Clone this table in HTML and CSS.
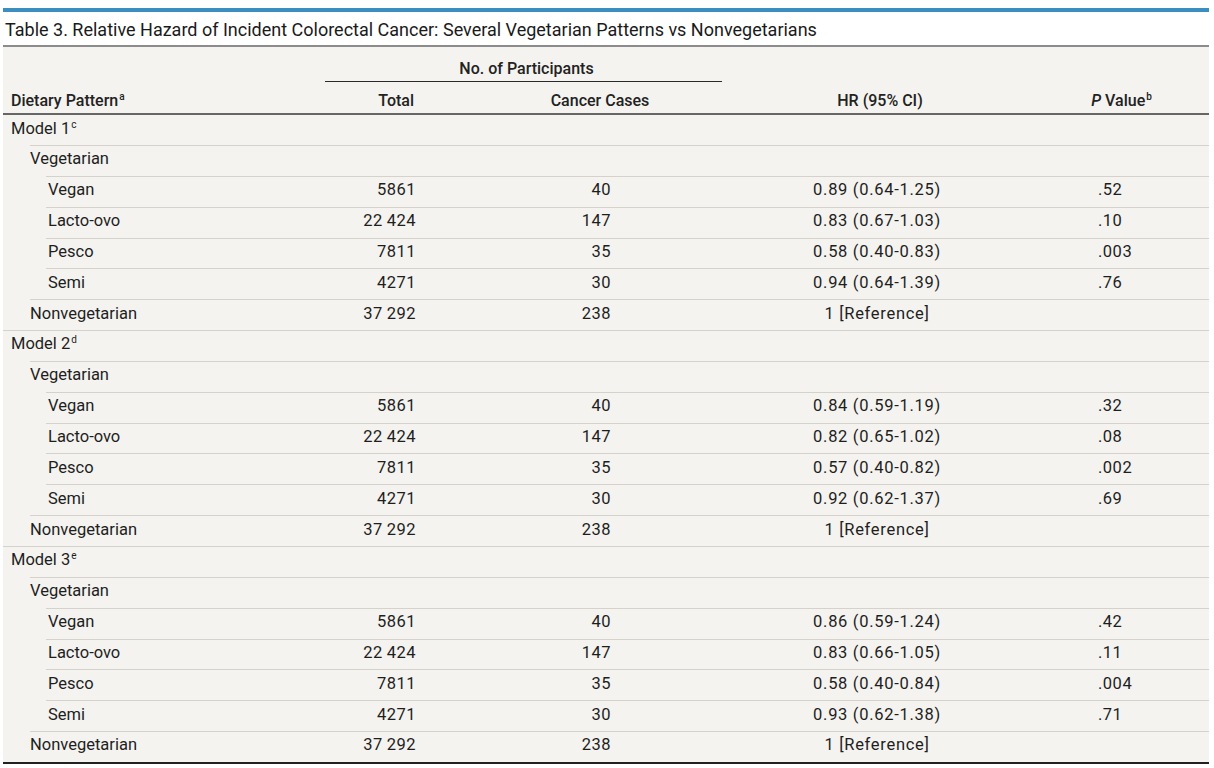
FILE: index.html
```html
<!DOCTYPE html>
<html lang="en">
<head>
<meta charset="utf-8">
<title>Table 3</title>
<link rel="stylesheet" href="styles.css">
</head>
<body>
<div class="page">
  <div class="topbar"></div>
  <h1 class="title">Table 3. Relative Hazard of Incident Colorectal Cancer: Several Vegetarian Patterns vs Nonvegetarians</h1>
  <table class="data">
    <colgroup>
      <col class="w1"><col class="w2"><col class="w3"><col class="w4"><col class="w5">
    </colgroup>
    <thead>
      <tr class="spanrow">
        <th></th>
        <th colspan="2" class="spanner">No. of Participants</th>
        <th></th>
        <th></th>
      </tr>
      <tr class="labels">
        <th class="c1">Dietary Pattern<sup>a</sup></th>
        <th class="c2h">Total</th>
        <th class="c3h">Cancer Cases</th>
        <th class="c4h">HR (95% CI)</th>
        <th class="c5h"><i>P</i> Value<sup>b</sup></th>
      </tr>
    </thead>
    <tbody>
      <tr class="l0 first"><td class="c1">Model 1<sup>c</sup></td><td></td><td></td><td></td><td></td></tr>
      <tr class="l1"><td class="c1">Vegetarian</td><td></td><td></td><td></td><td></td></tr>
      <tr class="l2"><td class="c1">Vegan</td><td class="c2">5861</td><td class="c3">40</td><td class="c4">0.89 (0.64-1.25)</td><td class="c5">.52</td></tr>
      <tr class="l2"><td class="c1">Lacto-ovo</td><td class="c2">22&#8201;424</td><td class="c3">147</td><td class="c4">0.83 (0.67-1.03)</td><td class="c5">.10</td></tr>
      <tr class="l2"><td class="c1">Pesco</td><td class="c2">7811</td><td class="c3">35</td><td class="c4">0.58 (0.40-0.83)</td><td class="c5">.003</td></tr>
      <tr class="l2"><td class="c1">Semi</td><td class="c2">4271</td><td class="c3">30</td><td class="c4">0.94 (0.64-1.39)</td><td class="c5">.76</td></tr>
      <tr class="l1"><td class="c1">Nonvegetarian</td><td class="c2">37&#8201;292</td><td class="c3">238</td><td class="c4">1 [Reference]</td><td class="c5"></td></tr>

      <tr class="l0"><td class="c1">Model 2<sup>d</sup></td><td></td><td></td><td></td><td></td></tr>
      <tr class="l1"><td class="c1">Vegetarian</td><td></td><td></td><td></td><td></td></tr>
      <tr class="l2"><td class="c1">Vegan</td><td class="c2">5861</td><td class="c3">40</td><td class="c4">0.84 (0.59-1.19)</td><td class="c5">.32</td></tr>
      <tr class="l2"><td class="c1">Lacto-ovo</td><td class="c2">22&#8201;424</td><td class="c3">147</td><td class="c4">0.82 (0.65-1.02)</td><td class="c5">.08</td></tr>
      <tr class="l2"><td class="c1">Pesco</td><td class="c2">7811</td><td class="c3">35</td><td class="c4">0.57 (0.40-0.82)</td><td class="c5">.002</td></tr>
      <tr class="l2"><td class="c1">Semi</td><td class="c2">4271</td><td class="c3">30</td><td class="c4">0.92 (0.62-1.37)</td><td class="c5">.69</td></tr>
      <tr class="l1"><td class="c1">Nonvegetarian</td><td class="c2">37&#8201;292</td><td class="c3">238</td><td class="c4">1 [Reference]</td><td class="c5"></td></tr>

      <tr class="l0"><td class="c1">Model 3<sup>e</sup></td><td></td><td></td><td></td><td></td></tr>
      <tr class="l1"><td class="c1">Vegetarian</td><td></td><td></td><td></td><td></td></tr>
      <tr class="l2"><td class="c1">Vegan</td><td class="c2">5861</td><td class="c3">40</td><td class="c4">0.86 (0.59-1.24)</td><td class="c5">.42</td></tr>
      <tr class="l2"><td class="c1">Lacto-ovo</td><td class="c2">22&#8201;424</td><td class="c3">147</td><td class="c4">0.83 (0.66-1.05)</td><td class="c5">.11</td></tr>
      <tr class="l2"><td class="c1">Pesco</td><td class="c2">7811</td><td class="c3">35</td><td class="c4">0.58 (0.40-0.84)</td><td class="c5">.004</td></tr>
      <tr class="l2"><td class="c1">Semi</td><td class="c2">4271</td><td class="c3">30</td><td class="c4">0.93 (0.62-1.38)</td><td class="c5">.71</td></tr>
      <tr class="l1 last"><td class="c1">Nonvegetarian</td><td class="c2">37&#8201;292</td><td class="c3">238</td><td class="c4">1 [Reference]</td><td class="c5"></td></tr>
    </tbody>
  </table>
</div>
</body>
</html>
```

FILE: styles.css
```css
* { box-sizing: border-box; }

html, body {
  margin: 0;
  padding: 0;
  background: #ffffff;
}

body {
  font-family: Roboto, "Liberation Sans", sans-serif;
  color: #1e1e1e;
}

.page {
  margin: 8px 0 0 3px;
  width: 1206px;
}

.topbar {
  height: 4px;
  background: #3d8ec0;
}

.title {
  margin: 0;
  height: 33px;
  line-height: 35px;
  font-size: 18px;
  font-weight: 400;
  padding-left: 2px;
  color: #1a1a1a;
  border-bottom: 2px solid #8c8c8c;
  box-sizing: content-box;
}

.data {
  width: 1206px;
  border-collapse: separate;
  border-spacing: 0;
  table-layout: fixed;
  background: #f4f3ef;
  font-size: 16.5px;
}

.w1 { width: 322px; }
.w2 { width: 153px; }
.w3 { width: 244px; }
.w4 { width: 310px; }
.w5 { width: 177px; }

th {
  font-weight: 500;
  font-size: 16px;
  padding: 0;
  color: #222222;
}

td {
  padding: 0 0 3px 0;
}

sup {
  font-size: 10px;
  line-height: 0;
  vertical-align: 6px;
  margin-left: 1px;
}

.spanrow th {
  height: 35px;
  vertical-align: bottom;
  padding-bottom: 3px;
  line-height: 18px;
}

.spanrow .spanner {
  border-bottom: 1px solid #2a2a2a;
  text-align: center;
  padding-left: 6px;
}

.labels th {
  height: 33px;
  vertical-align: middle;
  padding-top: 5px;
  border-bottom: 2px solid #666666;
}

.c1 { text-align: left; padding-left: 8px; }
.c2h { text-align: right; padding-right: 64px; }
.c2 { text-align: right; padding-right: 62px; letter-spacing: 0.5px; }
.c3h { text-align: center; }
.c3 { text-align: right; padding-right: 111px; letter-spacing: 0.5px; }
.c4h { text-align: center; padding-left: 6px; }
.c4 { text-align: center; letter-spacing: 0.7px; }
.c5h { text-align: center; padding-left: 2px; }
.c5 { text-align: left; padding-left: 66px; letter-spacing: 0.5px; }

tbody tr { height: 30.85px; }
tbody tr.first { height: 30px; }
tbody tr.last { height: 32.85px; }

tbody td {
  background: linear-gradient(#d4d2cb, #d4d2cb) no-repeat right top / 100% 1px;
}

tbody tr.first td { background: none; }

tbody tr.l1 td.c1 {
  padding-left: 27px;
  background-size: calc(100% - 27px) 1px;
}

tbody tr.l2 td.c1 {
  padding-left: 45px;
  background-size: calc(100% - 43px) 1px;
}

tbody tr.last td {
  border-bottom: 2px solid #222222;
}
```
